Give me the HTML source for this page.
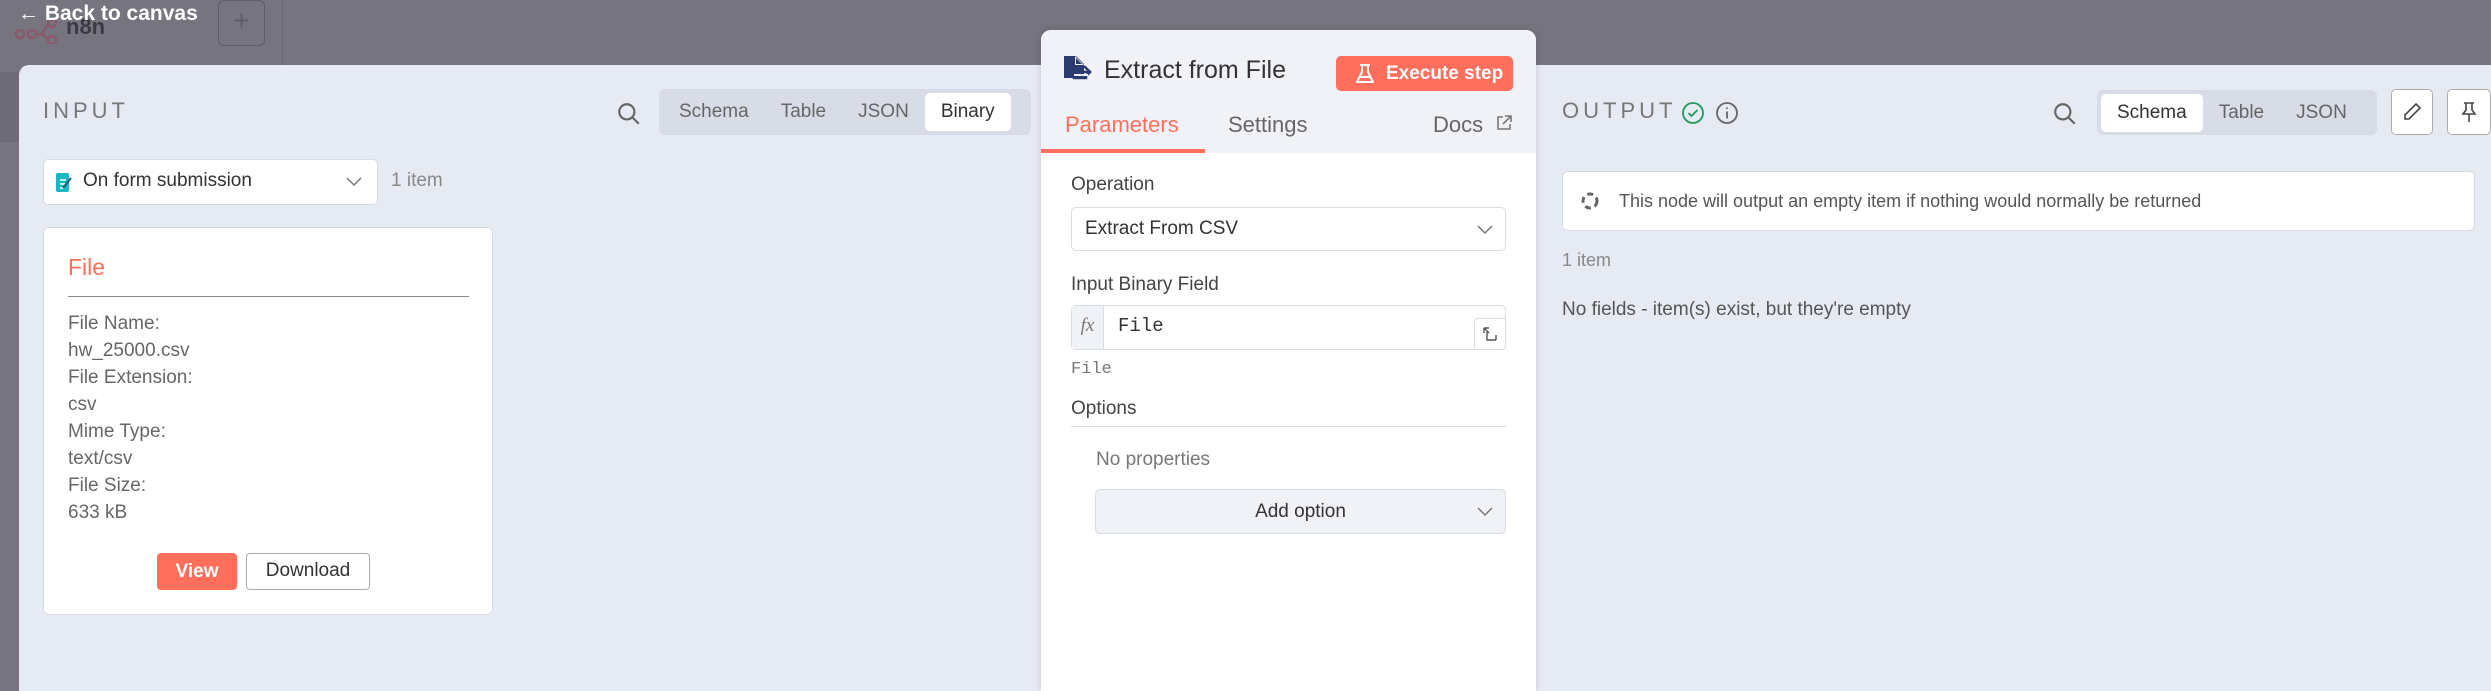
<!DOCTYPE html>
<html><head><meta charset="utf-8"><style>
*{box-sizing:border-box;margin:0;padding:0}
body{width:2491px;height:691px;overflow:hidden;background:#76747f;font-family:"Liberation Sans",sans-serif;position:relative;color:#555}
.a{position:absolute}
.panel{left:19px;top:65px;width:2472px;height:626px;background:#e6eaf3;border-radius:10px 0 0 0}
.tabs{background:#d8dce6;border-radius:6px;display:flex;padding:4px;gap:0}
.tabs div{padding:0 16px;height:38px;line-height:38px;font-size:19px;color:#666;border-radius:5px}
.tabs .on{background:#fff;color:#333}
.lbl{font-size:19px;color:#666;line-height:27px}
</style></head><body>
<svg class="a" style="left:14px;top:14px" width="50" height="30" viewBox="0 0 50 30"><g fill="none" stroke="#8a5a6a" stroke-width="2.5"><circle cx="6" cy="20" r="4"/><circle cx="18" cy="20" r="4"/><circle cx="38" cy="9" r="4"/><circle cx="38" cy="26" r="4"/><path d="M22 20h6l6-10M28 20l6 5"/></g></svg>
<div class="a" style="left:66px;top:14px;font-size:22px;color:#3c3a44;font-weight:bold">n8n</div>
<div class="a" style="left:218px;top:0;width:47px;height:46px;border:1.5px solid #5e5c66;border-radius:6px;color:#5e5c66;font-size:28px;text-align:center;line-height:40px">+</div>
<div class="a" style="left:282px;top:0;width:1px;height:65px;background:#6a6873"></div>
<div class="a" style="left:18px;top:0;font-size:21px;color:#fff;font-weight:bold;line-height:28px">&#8592; Back to canvas</div>
<div class="a" style="left:0;top:72px;width:19px;height:70px;background:#6e6c77"></div>

<div class="a panel"></div>
<div class="a" style="left:43px;top:98px;font-size:22px;letter-spacing:4px;color:#777">INPUT</div>
<svg class="a" style="left:616px;top:101px" width="26" height="26" viewBox="0 0 24 24" fill="none" stroke="#666" stroke-width="2"><circle cx="10" cy="10" r="7"/><path d="M15 15l6 6"/></svg>
<div class="a tabs" style="left:659px;top:89px;width:372px;height:46px"><div>Schema</div><div>Table</div><div>JSON</div><div class="on">Binary</div></div>
<div class="a" style="left:43px;top:159px;width:335px;height:46px;background:#fff;border:1px solid #d8dce6;border-radius:5px"></div>
<svg class="a" style="left:55px;top:170px" width="18" height="24" viewBox="0 0 18 24"><rect x="1" y="3" width="13" height="19" rx="2" fill="#17b8c4"/><path d="M5 10h6M5 14h6M5 18h4" stroke="#fff" stroke-width="1.5"/><path d="M8 18l8-10" stroke="#1d5b74" stroke-width="2"/></svg>
<div class="a" style="left:83px;top:170px;font-size:19px;color:#333">On form submission</div>
<svg class="a" style="left:345px;top:176px" width="18" height="12" viewBox="0 0 18 12" fill="none" stroke="#777" stroke-width="1.5"><path d="M2 2l7 7 7-7"/></svg>
<div class="a" style="left:391px;top:170px;font-size:19px;color:#888">1 item</div>
<div class="a" style="left:43px;top:227px;width:450px;height:388px;background:#fff;border:1px solid #d8dce6;border-radius:6px"></div>
<div class="a" style="left:68px;top:254px;font-size:23px;color:#ff6f5c">File</div>
<div class="a" style="left:68px;top:296px;width:401px;height:1px;background:#888"></div>
<div class="a lbl" style="left:68px;top:310px">File Name:<br>hw_25000.csv<br>File Extension:<br>csv<br>Mime Type:<br>text/csv<br>File Size:<br>633 kB</div>
<div class="a" style="left:157px;top:553px;width:80px;height:37px;background:#ff6f5c;border-radius:4px;color:#fff;font-size:19px;text-align:center;line-height:37px;font-weight:bold">View</div>
<div class="a" style="left:246px;top:553px;width:124px;height:37px;border:1.5px solid #aaa;border-radius:4px;color:#333;font-size:19px;text-align:center;line-height:34px">Download</div>

<div class="a" style="left:1041px;top:30px;width:495px;height:661px;background:#fff;border-radius:10px 10px 0 0;box-shadow:0 0 8px rgba(0,0,0,.15)"></div>
<div class="a" style="left:1041px;top:30px;width:495px;height:123px;background:#f0f2f8;border-radius:10px 10px 0 0"></div>
<svg class="a" style="left:1064px;top:56px" width="30" height="30" viewBox="0 0 30 30"><path d="M0 0h12l8 8v14H0z" fill="#2c3a72"/><path d="M11 0v9h9" fill="#f0f2f8"/><path d="M12 2l6 6h-6z" fill="#2c3a72"/><path d="M10 16h16M21 11l5 5-5 5M10 22h12" fill="none" stroke="#2c3a72" stroke-width="2.5" stroke-linecap="square"/><path d="M10 19h14" stroke="#f0f2f8" stroke-width="2"/></svg>
<div class="a" style="left:1104px;top:56px;font-size:25px;color:#333">Extract from File</div>
<div class="a" style="left:1336px;top:56px;width:177px;height:35px;background:#ff6f5c;border-radius:5px;color:#fff;font-size:19px;font-weight:bold;line-height:35px;padding-left:50px">Execute step</div>
<svg class="a" style="left:1356px;top:64px" width="18" height="20" viewBox="0 0 18 20" fill="none" stroke="#fff" stroke-width="2"><path d="M6 1v7L1 18h16L12 8V1M4 1h10M3 13h12"/></svg>
<div class="a" style="left:1065px;top:112px;font-size:22px;color:#ff6f5c">Parameters</div>
<div class="a" style="left:1041px;top:149px;width:164px;height:4px;background:#ff6f5c"></div>
<div class="a" style="left:1228px;top:112px;font-size:22px;color:#666">Settings</div>
<div class="a" style="left:1433px;top:112px;font-size:22px;color:#666">Docs</div>
<svg class="a" style="left:1496px;top:115px" width="16" height="16" viewBox="0 0 16 16" fill="none" stroke="#777" stroke-width="1.6"><path d="M7 2H2v12h12V9M9 1h6v6M15 1L7 9"/></svg>
<div class="a" style="left:1071px;top:174px;font-size:19px;color:#444">Operation</div>
<div class="a" style="left:1071px;top:207px;width:435px;height:44px;border:1px solid #d8dce6;border-radius:5px;font-size:19px;color:#333;line-height:42px;padding-left:13px">Extract From CSV</div>
<svg class="a" style="left:1476px;top:224px" width="18" height="12" viewBox="0 0 18 12" fill="none" stroke="#777" stroke-width="1.5"><path d="M2 2l7 7 7-7"/></svg>
<div class="a" style="left:1071px;top:274px;font-size:19px;color:#444">Input Binary Field</div>
<div class="a" style="left:1071px;top:305px;width:435px;height:45px;border:1px solid #d8dce6;border-radius:5px"></div>
<div class="a" style="left:1072px;top:306px;width:32px;height:43px;background:#f0f2f8;border-right:1px solid #d8dce6;font-family:'Liberation Serif',serif;font-style:italic;font-size:19px;color:#777;text-align:center;line-height:40px">fx</div>
<div class="a" style="left:1118px;top:315px;font-family:'Liberation Mono',monospace;font-size:19px;color:#333">File</div>
<div class="a" style="left:1474px;top:318px;width:32px;height:32px;border:1px solid #d8dce6;border-radius:4px 0 4px 0;background:#fff"></div>
<svg class="a" style="left:1482px;top:326px" width="16" height="16" viewBox="0 0 16 16" fill="none" stroke="#555" stroke-width="1.4"><path d="M2 2h5M2 2v5M2 2l5 5M14 14H9M14 14V9M5 6v8h9"/></svg>
<div class="a" style="left:1071px;top:360px;font-family:'Liberation Mono',monospace;font-size:17px;color:#777">File</div>
<div class="a" style="left:1071px;top:398px;font-size:19px;color:#444">Options</div>
<div class="a" style="left:1071px;top:426px;width:435px;height:1px;background:#d8dce6"></div>
<div class="a" style="left:1096px;top:449px;font-size:19px;color:#777">No properties</div>
<div class="a" style="left:1095px;top:489px;width:411px;height:45px;background:#f0f2f8;border:1px solid #d8dce6;border-radius:5px;font-size:19px;color:#333;text-align:center;line-height:43px">Add option</div>
<svg class="a" style="left:1476px;top:506px" width="18" height="12" viewBox="0 0 18 12" fill="none" stroke="#777" stroke-width="1.5"><path d="M2 2l7 7 7-7"/></svg>

<div class="a" style="left:1562px;top:98px;font-size:22px;letter-spacing:4px;color:#777">OUTPUT</div>
<svg class="a" style="left:1681px;top:101px" width="24" height="24" viewBox="0 0 24 24" fill="none" stroke="#1e9b5c" stroke-width="1.8"><circle cx="12" cy="12" r="10"/><path d="M7.5 12l3 3 6-6"/></svg>
<svg class="a" style="left:1715px;top:101px" width="24" height="24" viewBox="0 0 24 24" fill="none" stroke="#666" stroke-width="1.8"><circle cx="12" cy="12" r="10"/><path d="M12 10.5v7M12 6.5v1.5"/></svg>
<svg class="a" style="left:2052px;top:101px" width="26" height="26" viewBox="0 0 24 24" fill="none" stroke="#666" stroke-width="2"><circle cx="10" cy="10" r="7"/><path d="M15 15l6 6"/></svg>
<div class="a tabs" style="left:2097px;top:90px;width:280px;height:45px"><div class="on">Schema</div><div>Table</div><div>JSON</div></div>
<div class="a" style="left:2391px;top:89px;width:42px;height:46px;border:1px solid #aaa;border-radius:5px;background:#fff"></div>
<svg class="a" style="left:2402px;top:102px" width="20" height="20" viewBox="0 0 20 20" fill="none" stroke="#444" stroke-width="1.6"><path d="M14 2l4 4L7 17H3v-4z"/></svg>
<div class="a" style="left:2447px;top:89px;width:44px;height:46px;border:1px solid #aaa;border-radius:5px;background:#fff"></div>
<svg class="a" style="left:2459px;top:101px" width="20" height="22" viewBox="0 0 20 22" fill="none" stroke="#444" stroke-width="1.6"><path d="M5 2h10M7 2v7l-3 4h12l-3-4V2M10 13v8"/></svg>
<div class="a" style="left:1562px;top:171px;width:913px;height:60px;background:#fff;border:1px solid #d8dce6;border-radius:6px"></div>
<svg class="a" style="left:1580px;top:191px" width="20" height="20" viewBox="0 0 20 20" fill="none" stroke="#666" stroke-width="3" stroke-dasharray="6 4"><circle cx="10" cy="10" r="7"/></svg>
<div class="a" style="left:1619px;top:191px;font-size:18px;color:#555">This node will output an empty item if nothing would normally be returned</div>
<div class="a" style="left:1562px;top:250px;font-size:18px;color:#888">1 item</div>
<div class="a" style="left:1562px;top:299px;font-size:19px;color:#555">No fields - item(s) exist, but they're empty</div>
</body></html>
